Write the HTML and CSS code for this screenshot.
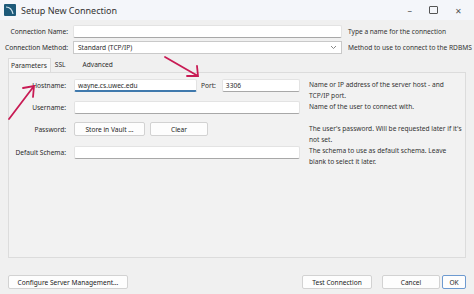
FILE: index.html
```html
<!DOCTYPE html>
<html lang="en">
<head>
    <meta charset="UTF-8">
    <title>Setup New Connection</title>
    <link rel="stylesheet" href="styles.css">
</head>
<body>

<div class="window">
    <div class="titlebar">
        <svg class="app-icon" width="12" height="12" viewBox="0 0 12 12">
            <rect width="12" height="12" rx="1" fill="#1d5a7a"/>
            <path d="M2 3 C5 3 8 5 9 10" stroke="#cfe3ee" stroke-width="1.2" fill="none"/>
        </svg>
        <span class="title">Setup New Connection</span>
        <div class="controls">
            <span class="ctl min">&#8211;</span>
            <span class="ctl max"></span>
            <span class="ctl close">&#x2715;</span>
        </div>
    </div>

    <div class="content">
        <div class="top-form">
            <label>Connection Name:</label>
            <div class="input"></div>
            <div class="help">Type a name for the connection</div>

            <label>Connection Method:</label>
            <div class="select">
                <span>Standard (TCP/IP)</span>
                <svg width="7" height="5" viewBox="0 0 7 5"><path d="M1 1 L3.5 3.5 L6 1" stroke="#888" fill="none"/></svg>
            </div>
            <div class="help">Method to use to connect to the RDBMS</div>
        </div>

        <div class="tabs">
            <div class="tab active">Parameters</div>
            <div class="tab">SSL</div>
            <div class="tab">Advanced</div>
        </div>

        <div class="panel">
            <label>Hostname:</label>
            <div class="host-row">
                <div class="input focused">wayne.cs.uwec.edu</div>
                <span class="port-label">Port:</span>
                <div class="input port">3306</div>
            </div>
            <div class="help">Name or IP address of the server host - and TCP/IP port.</div>

            <label>Username:</label>
            <div class="input"></div>
            <div class="help">Name of the user to connect with.</div>

            <label>Password:</label>
            <div class="btn-row">
                <button class="btn vault">Store in Vault ...</button>
                <button class="btn clear">Clear</button>
            </div>
            <div class="help">The user's password. Will be requested later if it's not set.</div>

            <label>Default Schema:</label>
            <div class="input"></div>
            <div class="help">The schema to use as default schema. Leave blank to select it later.</div>
        </div>

        <div class="footer">
            <button class="btn configure">Configure Server Management...</button>
            <div class="footer-right">
                <button class="btn test">Test Connection</button>
                <button class="btn cancel">Cancel</button>
                <button class="btn ok">OK</button>
            </div>
        </div>
    </div>

    <svg class="arrow arrow-host" width="40" height="40" viewBox="0 0 40 40">
        <path d="M9 34 L34 1 M23 3 L34 1 L33 12" stroke="#c81b54" stroke-width="1.8" fill="none" stroke-linecap="round"/>
    </svg>
    <svg class="arrow arrow-port" width="40" height="30" viewBox="0 0 40 30">
        <path d="M5 7 L38 26 M37 16 L38 26 L27 26" stroke="#c81b54" stroke-width="1.8" fill="none" stroke-linecap="round"/>
    </svg>
</div>

</body>
</html>
```

FILE: styles.css
```css
html, body {
    margin: 0;
    padding: 0;
}

body {
    font-family: "Noto Sans", "Open Sans", sans-serif;
    font-size: 6.6px;
    color: #2b2b2b;
    background-color: #f0f0f0;
}

.window {
    position: relative;
    width: 474px;
    height: 294px;
    background-color: #f0f0f0;
    overflow: hidden;
}

.titlebar {
    height: 20px;
    display: flex;
    align-items: center;
    background-color: #f4f6fa;
    padding-left: 4px;
}

.app-icon {
    margin-right: 5px;
}

.title {
    font-size: 9px;
    color: #333;
}

.controls {
    margin-left: auto;
    display: flex;
    align-items: center;
    gap: 17px;
    padding-right: 12px;
    color: #555;
}

.ctl.min {
    font-size: 9px;
}

.ctl.max {
    width: 7px;
    height: 6px;
    border: 1px solid #555;
    border-radius: 1px;
}

.ctl.close {
    font-size: 8px;
}

.content {
    padding: 5px 8px 0 0;
}

.top-form {
    display: grid;
    grid-template-columns: 68px 269px 1fr;
    column-gap: 5px;
    row-gap: 3px;
    align-items: center;
}

.top-form .help {
    white-space: nowrap;
}

label {
    text-align: right;
    white-space: nowrap;
}

.input {
    height: 11px;
    background-color: #fff;
    border: 1px solid #e3e3e3;
    border-bottom-color: #a8a8a8;
    border-radius: 2px;
    padding-left: 3px;
    line-height: 11px;
}

.input.focused {
    border-bottom: 2px solid #3f79ad;
    height: 10px;
}

.select {
    height: 11px;
    display: flex;
    align-items: center;
    justify-content: space-between;
    background-color: #fff;
    border: 1px solid #c9c9c9;
    padding: 0 4px 0 4px;
}

.help {
    line-height: 11px;
    padding-left: 1px;
    color: #333;
}

.tabs {
    display: flex;
    margin: 4px 0 0 8px;
    height: 14px;
}

.tab {
    padding: 0 3px 0 2px;
    line-height: 13px;
}

.tab.active {
    background-color: #f8f8f8;
    border: 1px solid #dcdcdc;
    border-bottom: none;
}

.tab + .tab {
    margin-left: 2px;
    padding-right: 13px;
}

.panel {
    margin-left: 8px;
    height: 186px;
    border: 1px solid #dcdcdc;
    background-color: #f2f2f2;
    display: grid;
    grid-template-columns: 57px 226px 1fr;
    grid-template-rows: 22px 22px 22px 24px;
    column-gap: 8px;
    align-content: start;
    padding-top: 1px;
    box-sizing: border-box;
}

.panel label,
.panel .input {
    align-self: center;
}

.panel .help {
    padding-right: 3px;
    align-self: start;
    padding-top: 5px;
}

.host-row {
    display: flex;
    align-items: center;
    align-self: center;
}

.host-row .input.focused {
    width: 118px;
}

.port-label {
    margin: 0 6px 0 4px;
}

.input.port {
    flex: 1;
}

.btn-row {
    display: flex;
    gap: 5px;
    align-self: center;
}

.btn {
    font-family: inherit;
    font-size: 6.6px;
    color: #222;
    height: 14px;
    padding: 0;
    background-color: #fdfdfd;
    border: 1px solid #d2d2d2;
    border-radius: 2px;
}

.btn.vault {
    width: 71px;
}

.btn.clear {
    width: 58px;
}

.footer {
    display: flex;
    justify-content: space-between;
    margin: 17px 0 0 8px;
}

.footer-right {
    display: flex;
    gap: 10px;
}

.btn.configure {
    width: 120px;
}

.btn.test {
    width: 70px;
}

.btn.cancel {
    width: 58px;
}

.btn.ok {
    width: 24px;
    margin-left: -8px;
    border-color: #6d9ad0;
}

.arrow {
    position: absolute;
}

.arrow-host {
    left: 0;
    top: 85px;
}

.arrow-port {
    left: 160px;
    top: 50px;
}
```
